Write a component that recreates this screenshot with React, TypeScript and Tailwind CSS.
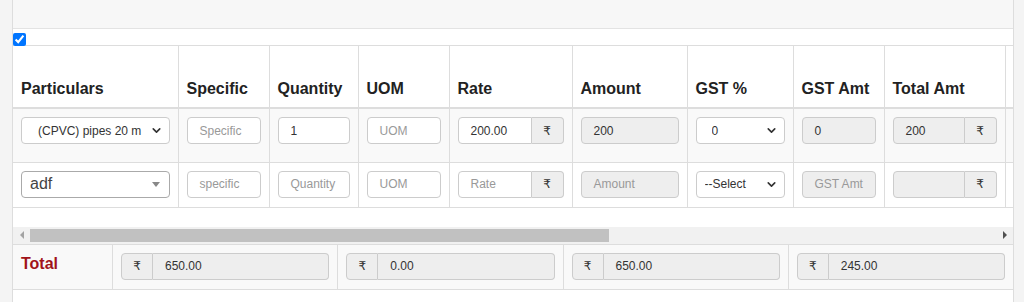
import { ChevronDown } from 'lucide-react'

const font = { fontFamily: '"Liberation Sans", Arial, "DejaVu Sans", sans-serif' }
const rupeeFont = '[font-family:"DejaVu_Sans","Noto_Sans",sans-serif]'

function Rupee() {
    return <span className={`${rupeeFont} text-[12px] text-[#333]`}>₹</span>
}

function TextBox({ value, placeholder, readOnly }: { value?: string; placeholder?: string; readOnly?: boolean }) {
    return (
        <div className={`h-[27px] w-full border border-[#ccc] rounded-[4px] px-3 flex items-center text-[12px] whitespace-nowrap overflow-hidden ${readOnly ? 'bg-[#eee]' : 'bg-white'}`}>
            {value ? <span className="text-[#333]">{value}</span> : <span className="text-[#999]">{placeholder}</span>}
        </div>
    )
}

function AddonBox({ value, placeholder, readOnly }: { value?: string; placeholder?: string; readOnly?: boolean }) {
    return (
        <div className="h-[27px] w-full flex text-[12px]">
            <div className={`flex-1 min-w-0 border border-[#ccc] rounded-l-[4px] px-3 flex items-center ${readOnly ? 'bg-[#eee]' : 'bg-white'}`}>
                {value ? <span className="text-[#333]">{value}</span> : <span className="text-[#999]">{placeholder}</span>}
            </div>
            <div className="w-[32px] border border-l-0 border-[#ccc] rounded-r-[4px] bg-[#eee] flex items-center justify-center">
                <Rupee />
            </div>
        </div>
    )
}

function SelectBox({ value, indent }: { value: string; indent: string }) {
    return (
        <div className={`h-[27px] w-full border border-[#ccc] rounded-[4px] bg-white flex items-center ${indent} pr-[6px] text-[12px] text-[#333]`}>
            <span className="flex-1 truncate">{value}</span>
            <ChevronDown className="w-[13px] h-[13px] text-[#333]" strokeWidth={3} />
        </div>
    )
}

const headers = [
    ['Particulars', 165],
    ['Specific', 91],
    ['Quantity', 89],
    ['UOM', 91],
    ['Rate', 123],
    ['Amount', 115],
    ['GST %', 106],
    ['GST Amt', 91],
    ['Total Amt', 121],
    ['', 120],
    ['', 160],
] as const

const cell1 = 'border border-[#ddd] px-2 pt-2 pb-[17px] align-top'
const cell2 = 'border border-[#ddd] px-2 pt-2 pb-[9px] align-top'

export default function App() {
    return (
        <div className="min-h-[302px] bg-[#f4f4f4] pl-3 pr-[10px]" style={font}>
            <div className="bg-white border-l border-r border-[#ddd] h-[302px] overflow-hidden">
                {/* top panel */}
                <div className="h-[29px] bg-[#f7f7f7] border-b border-[#e3e3e3]" />
                <div className="h-[17px] border-b border-[#ddd] flex items-end">
                    <input type="checkbox" defaultChecked className="w-[13px] h-[13px] m-0 mb-[-1px] accent-[#0075ff]" />
                </div>

                {/* items table */}
                <div className="overflow-hidden">
                    <table className="table-fixed border-collapse w-[1272px] mb-[19px]">
                        <colgroup>
                            {headers.map(([h, w], i) => (
                                <col key={i} style={{ width: w }} />
                            ))}
                        </colgroup>
                        <thead>
                            <tr className="h-[62px]">
                                {headers.map(([h], i) => (
                                    <th
                                        key={i}
                                        className="border border-t-0 border-b-2 border-[#ddd] first:border-l-0 px-2 pb-[6px] align-bottom text-left text-[16px] font-bold text-[#222]"
                                    >
                                        {h}
                                    </th>
                                ))}
                            </tr>
                        </thead>
                        <tbody>
                            <tr className="h-[54px] bg-[#f9f9f9]">
                                <td className={`${cell1} border-l-0`}>
                                    <SelectBox value="(CPVC) pipes 20 m" indent="pl-4" />
                                </td>
                                <td className={cell1}><TextBox placeholder="Specific" /></td>
                                <td className={cell1}><TextBox value="1" /></td>
                                <td className={cell1}><TextBox placeholder="UOM" /></td>
                                <td className={cell1}><AddonBox value="200.00" /></td>
                                <td className={cell1}><TextBox value="200" readOnly /></td>
                                <td className={cell1}><SelectBox value="0" indent="pl-[15px]" /></td>
                                <td className={cell1}><TextBox value="0" readOnly /></td>
                                <td className={cell1}><AddonBox value="200" readOnly /></td>
                                <td className={cell1}><TextBox /></td>
                                <td className={cell1}><TextBox /></td>
                            </tr>
                            <tr className="h-[44px] bg-white">
                                <td className={`${cell2} border-l-0`}>
                                    <div className="h-[27px] w-full border border-[#aaa] rounded-[4px] bg-white flex items-center pl-2 pr-[9px]">
                                        <span className="flex-1 text-[16px] text-[#444]">adf</span>
                                        <span className="w-0 h-0 border-l-[4px] border-r-[4px] border-t-[5px] border-l-transparent border-r-transparent border-t-[#888]" />
                                    </div>
                                </td>
                                <td className={cell2}><TextBox placeholder="specific" /></td>
                                <td className={cell2}><TextBox placeholder="Quantity" /></td>
                                <td className={cell2}><TextBox placeholder="UOM" /></td>
                                <td className={cell2}><AddonBox placeholder="Rate" /></td>
                                <td className={cell2}><TextBox placeholder="Amount" readOnly /></td>
                                <td className={cell2}><SelectBox value="--Select" indent="pl-[8px]" /></td>
                                <td className={cell2}><TextBox placeholder="GST Amt" readOnly /></td>
                                <td className={cell2}><AddonBox readOnly /></td>
                                <td className={cell2}><TextBox /></td>
                                <td className={cell2}><TextBox /></td>
                            </tr>
                        </tbody>
                    </table>
                </div>

                {/* horizontal scrollbar */}
                <div className="h-[17px] bg-[#f1f1f1] flex items-center">
                    <div className="w-[17px] flex justify-center">
                        <span className="w-0 h-0 border-t-[4px] border-b-[4px] border-r-[4px] border-t-transparent border-b-transparent border-r-[#a3a3a3]" />
                    </div>
                    <div className="w-[579px] h-[13px] bg-[#c1c1c1]" />
                    <div className="flex-1" />
                    <div className="w-[17px] flex justify-center">
                        <span className="w-0 h-0 border-t-[4px] border-b-[4px] border-l-[4px] border-t-transparent border-b-transparent border-l-[#505050]" />
                    </div>
                </div>

                {/* totals */}
                <div className="flex h-[46px] bg-[#f9f9f9] border-t border-b border-[#ddd]">
                    <div className="w-[100px] px-2 pt-[7px] text-[16px] font-bold text-[#a1131a] border-r border-[#ddd]">Total</div>
                    {['650.00', '0.00', '650.00', '245.00'].map((v, i) => (
                        <div key={i} className={`flex-1 px-2 pt-2 ${i < 3 ? 'border-r border-[#ddd]' : ''}`}>
                            <div className="h-[27px] flex text-[12px]">
                                <div className="w-[32px] border border-[#ccc] rounded-l-[4px] bg-[#eee] flex items-center justify-center">
                                    <Rupee />
                                </div>
                                <div className="flex-1 border border-l-0 border-[#ccc] rounded-r-[4px] bg-[#eee] px-3 flex items-center text-[#333]">
                                    {v}
                                </div>
                            </div>
                        </div>
                    ))}
                </div>
            </div>
        </div>
    )
}
